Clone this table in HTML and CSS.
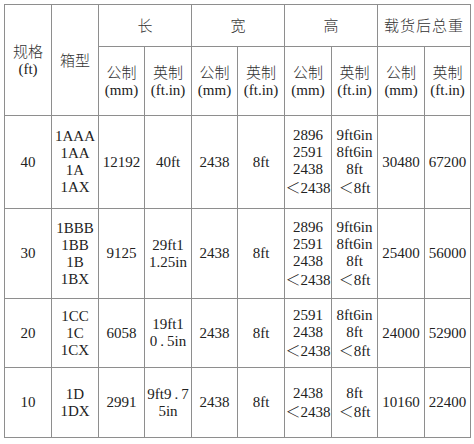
FILE: index.html
```html
<!DOCTYPE html>
<html>
<head>
<meta charset="utf-8">
<link rel="stylesheet" href="styles.css">
</head>
<body>
<table class="spec">
  <colgroup>
    <col class="c47"><col class="c47"><col class="c46"><col class="c47"><col class="c46">
    <col class="c47"><col class="c47"><col class="c46"><col class="c47"><col class="c46">
  </colgroup>
  <thead>
    <tr class="h1">
      <th rowspan="2"><span class="zh">规格</span><br>(ft)</th>
      <th rowspan="2"><span class="zh">箱型</span></th>
      <th colspan="2"><span class="zh">长</span></th>
      <th colspan="2"><span class="zh">宽</span></th>
      <th colspan="2"><span class="zh">高</span></th>
      <th colspan="2"><span class="zh wide">载货后总重</span></th>
    </tr>
    <tr class="h2">
      <th><span class="zh">公制</span><br>(mm)</th>
      <th><span class="zh">英制</span><br>(ft.in)</th>
      <th><span class="zh">公制</span><br>(mm)</th>
      <th><span class="zh">英制</span><br>(ft.in)</th>
      <th><span class="zh">公制</span><br>(mm)</th>
      <th><span class="zh">英制</span><br>(ft.in)</th>
      <th><span class="zh">公制</span><br>(mm)</th>
      <th><span class="zh">英制</span><br>(ft.in)</th>
    </tr>
  </thead>
  <tbody>
    <tr class="r1">
      <td>40</td>
      <td>1AAA<br>1AA<br>1A<br>1AX</td>
      <td>12192</td>
      <td>40ft</td>
      <td>2438</td>
      <td>8ft</td>
      <td>2896<br>2591<br>2438<br><span class="fw">＜</span>2438</td>
      <td>9ft6in<br>8ft6in<br>8ft<br><span class="fw">＜</span>8ft</td>
      <td>30480</td>
      <td>67200</td>
    </tr>
    <tr class="r2">
      <td>30</td>
      <td>1BBB<br>1BB<br>1B<br>1BX</td>
      <td>9125</td>
      <td>29ft1<br>1.25in</td>
      <td>2438</td>
      <td>8ft</td>
      <td>2896<br>2591<br>2438<br><span class="fw">＜</span>2438</td>
      <td>9ft6in<br>8ft6in<br>8ft<br><span class="fw">＜</span>8ft</td>
      <td>25400</td>
      <td>56000</td>
    </tr>
    <tr class="r3">
      <td>20</td>
      <td>1CC<br>1C<br>1CX</td>
      <td>6058</td>
      <td>19ft1<br>0&thinsp;.&thinsp;5in</td>
      <td>2438</td>
      <td>8ft</td>
      <td>2591<br>2438<br><span class="fw">＜</span>2438</td>
      <td>8ft6in<br>8ft<br><span class="fw">＜</span>8ft</td>
      <td>24000</td>
      <td>52900</td>
    </tr>
    <tr class="r4">
      <td>10</td>
      <td>1D<br>1DX</td>
      <td>2991</td>
      <td>9ft9&thinsp;.&thinsp;7<br>5in</td>
      <td>2438</td>
      <td>8ft</td>
      <td>2438<br><span class="fw">＜</span>2438</td>
      <td>8ft<br><span class="fw">＜</span>8ft</td>
      <td>10160</td>
      <td>22400</td>
    </tr>
  </tbody>
</table>
</body>
</html>
```

FILE: styles.css
```css
html, body {
  margin: 0;
  padding: 0;
  background: #ffffff;
}
body {
  padding: 4px;
}
.spec {
  border-collapse: collapse;
  table-layout: fixed;
  width: 466px;
  font-size: 15px;
  line-height: 17px;
  color: #222222;
}
.c47 { width: 47px; }
.c46 { width: 46px; }
.spec th,
.spec td {
  border: 1px solid #8e8e8e;
  padding: 0;
  text-align: center;
  vertical-align: middle;
  font-weight: normal;
  white-space: nowrap;
  font-family: "Liberation Serif";
}
.spec .zh {
  font-family: "Noto Sans CJK SC";
  font-weight: 300;
  color: #333333;
}
.wide {
  letter-spacing: 1px;
}
.spec .fw {
  font-family: "Noto Sans CJK SC";
  font-weight: 300;
}
.h1 { height: 42px; }
.h2 { height: 69px; }
.r1 { height: 93px; }
.r2 { height: 90px; }
.r3 { height: 69px; }
.r4 { height: 70px; }
```
